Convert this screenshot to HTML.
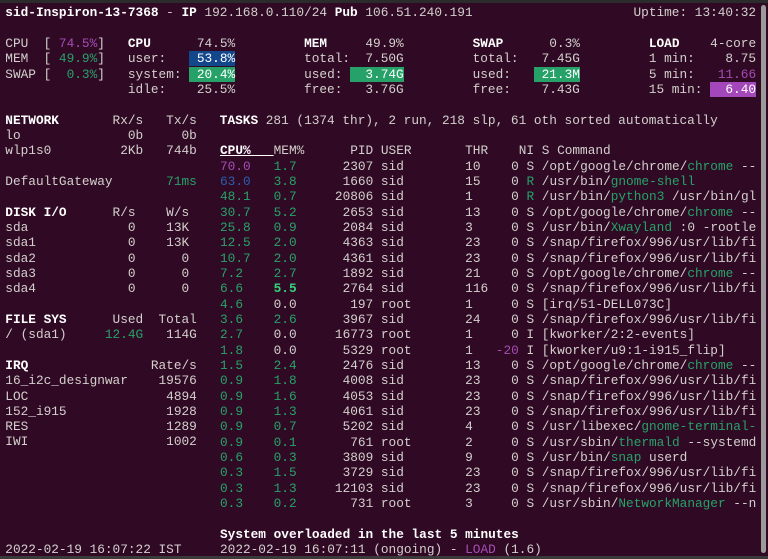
<!DOCTYPE html>
<html><head><meta charset="utf-8"><style>
html,body{margin:0;padding:0;}
body{width:768px;height:559px;background:#300a24;overflow:hidden;position:relative;}
.top{position:absolute;left:0;top:0;width:768px;height:3px;background:#2b2b2b;}
.bot{position:absolute;left:0;top:556px;width:768px;height:3px;background:#3a3a3a;}
.sb{position:absolute;left:761px;top:5px;width:5px;height:548px;background:#9e9a9c;border-radius:3px;}
pre{position:absolute;margin:0;font-family:"Liberation Mono",monospace;font-size:12.78px;line-height:15.333px;color:#d3d0cd;white-space:pre;}
#L{left:5.3px;top:5.3px;}
#R{left:220px;top:143.3px;}
b{font-weight:bold;color:#ffffff;}
.g{color:#26a269;}
.p{color:#a64cb5;}
.bl{color:#2a5db0;}
.bgb{background:#12488b;color:#fff;}
.bgg{background:#26a269;color:#fff;}
.bgp{background:#a347ba;color:#fff;}
.u{text-decoration:underline;font-weight:bold;color:#fff;}
.gb{color:#33d17a;font-weight:bold;}
</style></head><body>
<div class="top"></div>
<pre id="L"><b>sid-Inspiron-13-7368</b> - <b>IP</b> 192.168.0.110/24 <b>Pub</b> 106.51.240.191                     Uptime: 13:40:32

CPU  [ <span class="p">74.5%</span>]   <b>CPU</b>      74.5%         <b>MEM</b>     49.9%         <b>SWAP</b>      0.3%         <b>LOAD</b>    4-core
MEM  [ <span class="g">49.9%</span>]   user:   <span class="bgb"> 53.8%</span>         total:  7.50G         total:   7.45G         1 min:    8.75
SWAP [  <span class="g">0.3%</span>]   system: <span class="bgg"> 20.4%</span>         used: <span class="bgg">  3.74G</span>         used:   <span class="bgg"> 21.3M</span>         5 min:   <span class="p">11.66</span>
                idle:    25.5%         free:   3.76G         free:    7.43G         15 min: <span class="bgp">  6.40</span>

<b>NETWORK</b>       Rx/s   Tx/s   <b>TASKS</b> 281 (1374 thr), 2 run, 218 slp, 61 oth sorted automatically
lo              0b     0b
wlp1s0         2Kb   744b

DefaultGateway       <span class="g">71ms</span>

<b>DISK I/O</b>      R/s    W/s
sda             0    13K
sda1            0    13K
sda2            0      0
sda3            0      0
sda4            0      0

<b>FILE SYS</b>      Used  Total
/ (sda1)     <span class="g">12.4G</span>   114G

<b>IRQ</b>                Rate/s
16_i2c_designwar    19576
LOC                  4894
152_i915             1928
RES                  1289
IWI                  1002






2022-02-19 16:07:22 IST</pre>
<pre id="R"><span class="u">CPU%   </span>MEM%      PID USER       THR    NI S Command
<span class="p">70.0</span>   <span class="g">1.7</span>      2307 sid        10    0 S /opt/google/chrome/<span class="g">chrome</span> --
<span class="bl">63.0</span>   <span class="g">3.8</span>      1660 sid        15    0 <span class="g">R</span> /usr/bin/<span class="g">gnome-shell</span>
<span class="g">48.1</span>   <span class="g">0.7</span>     20806 sid        1     0 <span class="g">R</span> /usr/bin/<span class="g">python3</span> /usr/bin/gl
<span class="g">30.7</span>   <span class="g">5.2</span>      2653 sid        13    0 S /opt/google/chrome/<span class="g">chrome</span> --
<span class="g">25.8</span>   <span class="g">0.9</span>      2084 sid        3     0 S /usr/bin/<span class="g">Xwayland</span> :0 -rootle
<span class="g">12.5</span>   <span class="g">2.0</span>      4363 sid        23    0 S /snap/firefox/996/usr/lib/fi
<span class="g">10.7</span>   <span class="g">2.0</span>      4361 sid        23    0 S /snap/firefox/996/usr/lib/fi
<span class="g">7.2</span>    <span class="g">2.7</span>      1892 sid        21    0 S /opt/google/chrome/<span class="g">chrome</span> --
<span class="g">6.6</span>    <span class="gb">5.5</span>      2764 sid        116   0 S /snap/firefox/996/usr/lib/fi
<span class="g">4.6</span>    0.0       197 root       1     0 S [irq/51-DELL073C]
<span class="g">3.6</span>    <span class="g">2.6</span>      3967 sid        24    0 S /snap/firefox/996/usr/lib/fi
<span class="g">2.7</span>    0.0     16773 root       1     0 I [kworker/2:2-events]
<span class="g">1.8</span>    0.0      5329 root       1   <span class="p">-20</span> I [kworker/u9:1-i915_flip]
<span class="g">1.5</span>    <span class="g">2.4</span>      2476 sid        13    0 S /opt/google/chrome/<span class="g">chrome</span> --
<span class="g">0.9</span>    <span class="g">1.8</span>      4008 sid        23    0 S /snap/firefox/996/usr/lib/fi
<span class="g">0.9</span>    <span class="g">1.6</span>      4053 sid        23    0 S /snap/firefox/996/usr/lib/fi
<span class="g">0.9</span>    <span class="g">1.3</span>      4061 sid        23    0 S /snap/firefox/996/usr/lib/fi
<span class="g">0.9</span>    <span class="g">0.7</span>      5202 sid        4     0 S /usr/libexec/<span class="g">gnome-terminal-</span>
<span class="g">0.9</span>    <span class="g">0.1</span>       761 root       2     0 S /usr/sbin/<span class="g">thermald</span> --systemd
<span class="g">0.6</span>    <span class="g">0.3</span>      3809 sid        9     0 S /usr/bin/<span class="g">snap</span> userd
<span class="g">0.3</span>    <span class="g">1.5</span>      3729 sid        23    0 S /snap/firefox/996/usr/lib/fi
<span class="g">0.3</span>    <span class="g">1.3</span>     12103 sid        23    0 S /snap/firefox/996/usr/lib/fi
<span class="g">0.3</span>    <span class="g">0.2</span>       731 root       3     0 S /usr/sbin/<span class="g">NetworkManager</span> --n

<b>System overloaded in the last 5 minutes</b>
2022-02-19 16:07:11 (ongoing) - <span class="p">LOAD</span> (1.6)</pre>
<div class="sb"></div>
<div class="bot"></div>
</body></html>
